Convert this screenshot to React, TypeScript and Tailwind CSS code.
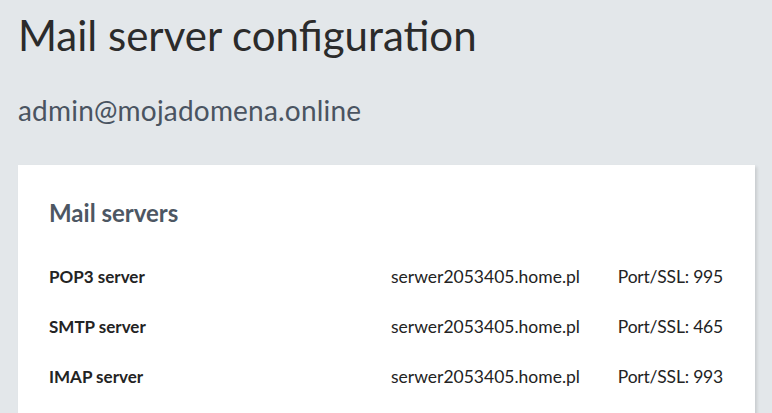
import React from "react";

const rows = [
  { label: "POP3 server", host: "serwer2053405.home.pl", port: "Port/SSL: 995" },
  { label: "SMTP server", host: "serwer2053405.home.pl", port: "Port/SSL: 465" },
  { label: "IMAP server", host: "serwer2053405.home.pl", port: "Port/SSL: 993" },
];

export default function App() {
  return (
    <div className="min-h-screen bg-[#e3e7ea] pl-[18px] pr-[17px] pt-[10px] font-['Lato',sans-serif]">
      <h1 className="text-[42px] leading-[50px] text-[#2b2b2b] font-normal">Mail server configuration</h1>
      <h2 className="mt-[35px] text-[28px] leading-[30px] text-[#4a5461] font-normal tracking-[0.2px]">admin@mojadomena.online</h2>
      <div className="mt-[40px] bg-white shadow-[2px_2px_3px_rgba(0,0,0,0.12)] pl-[31px] pr-[32px] pt-[33px] pb-[40px]">
        <h3 className="text-[24px] leading-[30px] font-bold text-[#4d5763]">Mail servers</h3>
        <div className="mt-[24px]">
          {rows.map((r) => (
            <div key={r.label} className="flex items-center h-[50px] leading-[50px] text-[17.5px] text-[#232323]">
              <div className="flex-1 font-bold text-[17px]">{r.label}</div>
              <div className="w-[200px] text-right">{r.host}</div>
              <div className="w-[143px] text-right tracking-[-0.2px]">{r.port}</div>
            </div>
          ))}
        </div>
      </div>
    </div>
  );
}
